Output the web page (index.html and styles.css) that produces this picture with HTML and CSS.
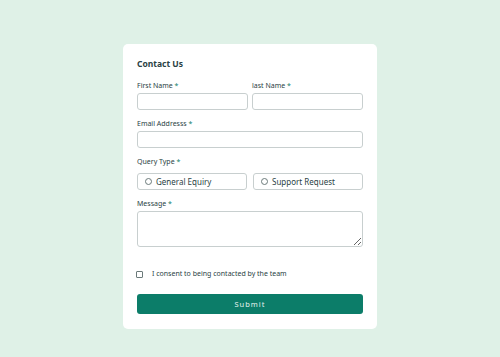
FILE: index.html
```html
<!DOCTYPE html>
<html lang="en">
<head>
    <meta charset="UTF-8">
    <meta name="viewport" content="width=device-width, initial-scale=1.0">
    <title>Contact Us</title>
    <link rel="stylesheet" href="styles.css">
</head>
<body>

<form class="card">
    <h1 class="title">Contact Us</h1>

    <div class="row">
        <div class="field">
            <label for="first">First Name <span class="req">*</span></label>
            <input type="text" id="first">
        </div>
        <div class="field">
            <label for="last">last Name <span class="req">*</span></label>
            <input type="text" id="last">
        </div>
    </div>

    <div class="field">
        <label for="email">Email Addresss <span class="req">*</span></label>
        <input type="email" id="email">
    </div>

    <div class="field">
        <span class="label">Query Type <span class="req">*</span></span>
        <div class="radios">
            <label class="radio"><span class="dot"></span>General Equiry</label>
            <label class="radio"><span class="dot"></span>Support Request</label>
        </div>
    </div>

    <div class="field">
        <label for="message">Message <span class="req">*</span></label>
        <textarea id="message"></textarea>
    </div>

    <label class="consent"><span class="box"></span>I consent to being contacted by the team</label>

    <button type="button" class="submit">Submit</button>
</form>

</body>
</html>
```

FILE: styles.css
```css
body {
    margin: 0;
    padding: 44px 0 0;
    background: #dff1e7;
    font-family: 'Noto Sans', sans-serif;
    color: #2a4244;
}
.card {
    width: 226px;
    margin: 0 auto;
    background: white;
    border-radius: 5px;
    padding: 14px 14px 15px;
    display: flex;
    flex-direction: column;
}
.title {
    font-size: 8.5px;
    font-weight: bold;
    line-height: 12px;
    margin: 0 0 11px;
}
.row {
    display: flex;
    gap: 4px;
}
.row .field {
    flex: 1;
}
.field {
    display: flex;
    flex-direction: column;
    margin-bottom: 9px;
}
.field label,
.field .label {
    font-size: 7px;
    line-height: 10px;
    margin-bottom: 2px;
}
.req {
    color: #0c7d69;
}
input,
textarea {
    box-sizing: border-box;
    height: 17px;
    border: 1px solid #c8cfcf;
    border-radius: 3px;
    font-family: inherit;
    width: 100%;
    margin: 0;
}
textarea {
    height: 36px;
    resize: vertical;
}
.radios {
    display: flex;
    gap: 6px;
    margin-top: 4px;
}
.radio {
    flex: 1;
    box-sizing: border-box;
    height: 17px;
    border: 1px solid #c8cfcf;
    border-radius: 3px;
    display: flex;
    align-items: center;
    padding-left: 7px;
    font-size: 8px !important;
    margin: 0 !important;
}
.dot {
    width: 5px;
    height: 5px;
    border: 1px solid #6b7a7a;
    border-radius: 50%;
    margin-right: 4px;
}
.consent {
    display: flex;
    align-items: center;
    font-size: 7px;
    margin: 13px 0 15px -1px;
    line-height: 10px;
}
.box {
    width: 5px;
    height: 5px;
    border: 1px solid #6b7a7a;
    border-radius: 1px;
    margin-right: 9px;
}
.submit {
    height: 20px;
    border: none;
    border-radius: 3px;
    background: #0c7d69;
    color: #e6f2ef;
    font-family: inherit;
    font-size: 7.5px;
    letter-spacing: 1px;
    cursor: pointer;
}
```
